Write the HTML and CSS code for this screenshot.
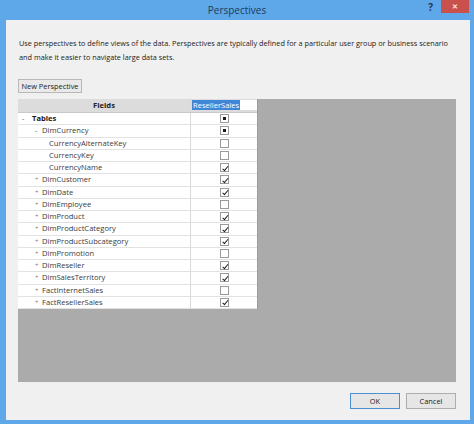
FILE: index.html
```html
<!DOCTYPE html>
<html>
<head>
<meta charset="utf-8">
<link rel="stylesheet" href="styles.css">
</head>
<body>
<div class="window">
  <div class="titlebar">
    <div></div>
    <div class="title">Perspectives</div>
    <div class="controls">
      <span class="help">?</span>
      <span class="close">&#x2715;</span>
    </div>
  </div>
  <div class="client">
    <p class="desc">Use perspectives to define views of the data. Perspectives are typically defined for a particular user group or business scenario and make it easier to navigate large data sets.</p>
    <div class="toolbar"><button class="btn new-btn">New Perspective</button></div>
    <div class="grid-area">
      <div class="grid">
        <div class="row head">
          <div class="c1 fields">Fields</div>
          <div class="c2"><span class="edit"><span class="sel">ResellerSales</span></span></div>
        </div>
        <div class="row"><div class="c1 l0"><span class="exp">-</span><b>Tables</b></div><div class="c2"><span class="cb ind"></span></div></div>
        <div class="row"><div class="c1 l1"><span class="exp">-</span>DimCurrency</div><div class="c2"><span class="cb ind"></span></div></div>
        <div class="row"><div class="c1 l2">CurrencyAlternateKey</div><div class="c2"><span class="cb"></span></div></div>
        <div class="row"><div class="c1 l2">CurrencyKey</div><div class="c2"><span class="cb"></span></div></div>
        <div class="row"><div class="c1 l2">CurrencyName</div><div class="c2"><span class="cb on"></span></div></div>
        <div class="row"><div class="c1 l1"><span class="exp plus">+</span>DimCustomer</div><div class="c2"><span class="cb on"></span></div></div>
        <div class="row"><div class="c1 l1"><span class="exp plus">+</span>DimDate</div><div class="c2"><span class="cb on"></span></div></div>
        <div class="row"><div class="c1 l1"><span class="exp plus">+</span>DimEmployee</div><div class="c2"><span class="cb"></span></div></div>
        <div class="row"><div class="c1 l1"><span class="exp plus">+</span>DimProduct</div><div class="c2"><span class="cb on"></span></div></div>
        <div class="row"><div class="c1 l1"><span class="exp plus">+</span>DimProductCategory</div><div class="c2"><span class="cb on"></span></div></div>
        <div class="row"><div class="c1 l1"><span class="exp plus">+</span>DimProductSubcategory</div><div class="c2"><span class="cb on"></span></div></div>
        <div class="row"><div class="c1 l1"><span class="exp plus">+</span>DimPromotion</div><div class="c2"><span class="cb"></span></div></div>
        <div class="row"><div class="c1 l1"><span class="exp plus">+</span>DimReseller</div><div class="c2"><span class="cb on"></span></div></div>
        <div class="row"><div class="c1 l1"><span class="exp plus">+</span>DimSalesTerritory</div><div class="c2"><span class="cb on"></span></div></div>
        <div class="row"><div class="c1 l1"><span class="exp plus">+</span>FactInternetSales</div><div class="c2"><span class="cb"></span></div></div>
        <div class="row"><div class="c1 l1"><span class="exp plus">+</span>FactResellerSales</div><div class="c2"><span class="cb on"></span></div></div>
      </div>
    </div>
    <div class="footer">
      <button class="btn ok">OK</button>
      <button class="btn">Cancel</button>
    </div>
  </div>
</div>
</body>
</html>
```
FILE: styles.css
```css
* { box-sizing: border-box; }
html, body { margin: 0; padding: 0; }
body {
  width: 474px;
  height: 424px;
  overflow: hidden;
  background: #5ea8ea;
  font-family: "Open Sans", "Noto Sans", sans-serif;
  color: #1e1e1e;
}
.window {
  width: 474px;
  height: 424px;
  display: flex;
  flex-direction: column;
}
.titlebar {
  height: 20px;
  display: grid;
  grid-template-columns: 1fr auto 1fr;
  align-items: start;
}
.title {
  font-size: 10px;
  line-height: 20px;
  color: #1d3a58;
}
.controls {
  justify-self: end;
  display: flex;
  align-items: flex-start;
  margin-right: 5px;
}
.help {
  font-size: 10px;
  font-weight: bold;
  line-height: 14px;
  color: #22364c;
  margin-right: 8px;
}
.close {
  width: 28px;
  height: 13px;
  background: #c9504b;
  color: #fbe4e2;
  font-size: 7px;
  font-weight: bold;
  line-height: 13px;
  text-align: center;
}
.client {
  flex: 1;
  margin: 0 4px 4px 6px;
  background: #f0f0f0;
  display: flex;
  flex-direction: column;
}
.desc {
  margin: 16px 14px 0 13px;
  font-size: 7.3px;
  line-height: 14px;
  color: #222;
}
.toolbar {
  display: flex;
  margin: 15px 0 0 12px;
}
.btn {
  font-family: inherit;
  font-size: 7.4px;
  color: #222;
  background: #e6e6e6;
  border: 1px solid #adadad;
  padding: 0;
  height: 16px;
  width: 50px;
}
.new-btn {
  width: 64px;
  height: 14px;
  background: #e9e9e9;
  border-color: #b8b8b8;
}
.grid-area {
  margin: 6px 14px 0 12px;
  height: 283px;
  background: #ababab;
}
.grid {
  width: 240px;
  background: #fff;
  border-right: 1px solid #9c9c9c;
}
.row {
  display: grid;
  grid-template-columns: 173px 1fr;
  height: 12.25px;
  border-bottom: 1px solid #e2e2e2;
  font-size: 7.6px;
  line-height: 11px;
}
.row.head {
  height: 14px;
  background: #dcdcdc;
  border-bottom: 1px solid #c8c8c8;
}
.c1 {
  border-right: 1px solid #d8d8d8;
  white-space: nowrap;
  color: #3a3a3a;
  display: flex;
  align-items: center;
}
.c2 {
  display: flex;
  align-items: center;
  justify-content: center;
}
.fields {
  justify-content: center;
  font-weight: bold;
  color: #222;
}
.head .c2 {
  justify-content: flex-start;
  padding: 1px 0 2px 1px;
}
.edit {
  display: flex;
  align-items: center;
  width: 100%;
  height: 100%;
  background: #fff;
}
.sel {
  background: #3f86d9;
  color: #fff;
  line-height: 10px;
  padding: 0 1px;
}
.exp {
  display: inline-block;
  width: 7px;
  color: #555;
}
.plus { color: #777; font-size: 6px; }
.l0 { padding-left: 4px; }
.l0 .exp { width: 10px; }
.l0 b { color: #1a1a1a; }
.l1 { padding-left: 17px; }
.l2 { padding-left: 31px; }
.cb {
  width: 9px;
  height: 9px;
  border: 1px solid #9a9a9a;
  background: #fff;
  position: relative;
  margin-left: 1px;
}
.cb.ind::after {
  content: "";
  position: absolute;
  left: 2px;
  top: 2px;
  width: 3px;
  height: 3px;
  background: #1a1a1a;
}
.cb.on::after {
  content: "";
  position: absolute;
  left: 2.5px;
  top: 0.5px;
  width: 2px;
  height: 4.5px;
  border: solid #1a1a1a;
  border-width: 0 1.5px 1.5px 0;
  transform: rotate(40deg);
}
.footer {
  margin: auto 14px 11px 0;
  display: flex;
  justify-content: flex-end;
  gap: 6px;
}
.btn.ok {
  border-color: #4a8fcf;
}
```
